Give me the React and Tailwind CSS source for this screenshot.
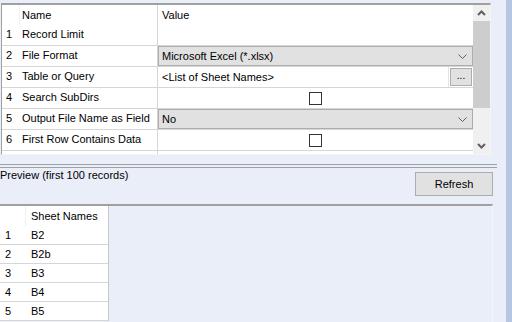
import React from 'react';

const font = { fontFamily: '"Liberation Sans", Arial, sans-serif' };

const Chevron = ({ className = '' }) => (
  <svg width="9" height="5" viewBox="0 0 9 5" className={className}>
    <path d="M0.5 0.5 L4.5 4.5 L8.5 0.5" fill="none" stroke="#606060" strokeWidth="1" />
  </svg>
);

const ArrowUp = () => (
  <svg width="9" height="6" viewBox="0 0 9 6">
    <path d="M1 5 L4.5 1.5 L8 5" fill="none" stroke="#606060" strokeWidth="2" />
  </svg>
);

const ArrowDown = () => (
  <svg width="9" height="6" viewBox="0 0 9 6">
    <path d="M1 1 L4.5 4.5 L8 1" fill="none" stroke="#606060" strokeWidth="2" />
  </svg>
);

const Checkbox = () => <div className="w-[13px] h-[13px] border border-[#333333] bg-white" />;

const rows = [
  { n: 1, name: 'Record Limit', kind: 'text', value: '' },
  { n: 2, name: 'File Format', kind: 'select', value: 'Microsoft Excel (*.xlsx)' },
  { n: 3, name: 'Table or Query', kind: 'browse', value: '<List of Sheet Names>' },
  { n: 4, name: 'Search SubDirs', kind: 'check' },
  { n: 5, name: 'Output File Name as Field', kind: 'select', value: 'No' },
  { n: 6, name: 'First Row Contains Data', kind: 'check' },
];

const sheets = ['B2', 'B2b', 'B3', 'B4', 'B5'];

const ValueCell = ({ row }) => {
  if (row.kind === 'select') {
    return (
      <div className="h-full flex items-center justify-between bg-[#e1e1e1] border border-[#adadad] pl-[3px] pr-[5px]">
        <span>{row.value}</span>
        <Chevron />
      </div>
    );
  }
  if (row.kind === 'browse') {
    return (
      <div className="h-full flex items-center">
        <span className="flex-1 pl-[4px]">{row.value}</span>
        <div className="h-full border-l border-[#e3e3e3] flex items-center pl-[1px] pr-[1px]">
          <div className="w-[22px] h-[18px] bg-[#e1e1e1] border border-[#adadad] flex items-center justify-center text-[10px] leading-none pb-[3px]">...</div>
        </div>
      </div>
    );
  }
  if (row.kind === 'check') {
    return (
      <div className="h-full flex items-center justify-center">
        <Checkbox />
      </div>
    );
  }
  return <div className="h-full pl-[4px]">{row.value}</div>;
};

export default function App() {
  return (
    <div className="w-[512px] h-[322px] bg-[#e9eef8] flex overflow-hidden text-[11px] text-black" style={font}>
      <div className="w-[506px] flex flex-col">
        {/* property grid */}
        <div className="mt-[3px] ml-[1px] w-[490px] h-[152px] border-t-2 border-l border-t-[#a0a0a0] border-l-[#a0a0a0] border-r border-b border-r-[#f4f4f4] border-b-[#f4f4f4] bg-white flex overflow-hidden">
          <div className="flex-1 flex flex-col">
            <div className="h-[20px] flex shrink-0">
              <div className="w-[18px] border-r border-[#f0f0f0]" />
              <div className="w-[138px] border-r border-[#d6d6d6] pl-[2px] pt-[2px]">Name</div>
              <div className="flex-1 pl-[4px] pt-[2px]">Value</div>
            </div>
            {rows.map((r) => (
              <div key={r.n} className="h-[21px] flex shrink-0 border-b border-[#d6d6d6] leading-[19px]">
                <div className="w-[18px] pl-[4px]">{r.n}</div>
                <div className="w-[138px] border-r border-[#d6d6d6] pl-[2px] whitespace-nowrap">{r.name}</div>
                <div className="flex-1">
                  <ValueCell row={r} />
                </div>
              </div>
            ))}
            <div className="flex-1 flex">
              <div className="w-[156px] border-r border-[#d6d6d6]" />
            </div>
          </div>
          <div className="w-[17px] bg-[#f0f0f0] flex flex-col items-center">
            <div className="h-[16px] flex items-center justify-center"><ArrowUp /></div>
            <div className="w-full h-[87px] bg-[#cdcdcd]" />
            <div className="flex-1" />
            <div className="h-[16px] flex items-center justify-center"><ArrowDown /></div>
          </div>
        </div>

        {/* splitter */}
        <div className="mt-[9px] w-[497px] h-[4px] border-t border-b border-[#a0a0a0]" />

        {/* preview header */}
        <div className="flex justify-between items-start w-[493px] mt-[1px]">
          <div className="leading-[13px]">Preview (first 100 records)</div>
          <div className="mt-[3px] w-[78px] h-[24px] bg-[#e1e1e1] border border-[#adadad] flex items-center justify-center">Refresh</div>
        </div>

        {/* preview grid */}
        <div className="mt-[8px] w-[493px] flex-1 border-t-2 border-t-[#a0a0a0] border-r border-r-[#f4f4f4]">
          <div className="w-[109px] bg-white border-r border-[#c8c8c8]">
            <div className="h-[20px] flex leading-[20px]">
              <div className="w-[26px] border-r border-[#f0f0f0]" />
              <div className="pl-[5px]">Sheet Names</div>
            </div>
            {sheets.map((s, i) => (
              <div key={s} className="h-[19px] flex border-b border-[#d6d6d6] leading-[18px]">
                <div className="w-[26px] pl-[5px]">{i + 1}</div>
                <div className="pl-[5px]">{s}</div>
              </div>
            ))}
          </div>
        </div>
      </div>
      <div className="w-[6px] bg-[#b7c6e2]" />
    </div>
  );
}
